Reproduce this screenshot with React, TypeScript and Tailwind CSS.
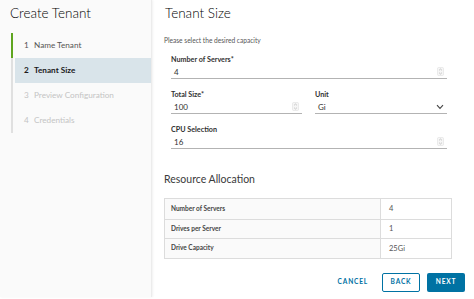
import React from "react";

const Spinner = () => (
  <svg width="7" height="9" viewBox="0 0 7 9" className="shrink-0">
    <rect x="0.5" y="0.5" width="6" height="8" rx="1" fill="#f6f6f6" stroke="#e0e0e0" strokeWidth="0.6" />
    <path d="M2 3.4 L3.5 2 L5 3.4" fill="none" stroke="#b4b4b4" strokeWidth="0.7" />
    <path d="M2 5.6 L3.5 7 L5 5.6" fill="none" stroke="#b4b4b4" strokeWidth="0.7" />
  </svg>
);

const Chevron = () => (
  <svg width="8" height="6" viewBox="0 0 8 6" className="shrink-0">
    <path d="M1 1.2 L4 4.4 L7 1.2" fill="none" stroke="#454545" strokeWidth="1.1" />
  </svg>
);

function Field({ label, value, icon }: { label: string; value: string; icon: React.ReactNode }) {
  return (
    <div className="flex flex-col">
      <div className="text-[7.2px] font-bold text-[#313131] leading-[10px]">{label}</div>
      <div className="flex items-center h-[14px] pl-[3px] pr-[3px] border-b border-[#b3b3b3] text-[8px] text-[#313131]">
        <span className="flex-1">{value}</span>
        {icon}
      </div>
    </div>
  );
}

export default function App() {
  const rows = [
    ["Number of Servers", "4"],
    ["Drives per Server", "1"],
    ["Drive Capacity", "25Gi"],
  ];
  return (
    <div className="w-[474px] h-[299px] flex bg-white overflow-hidden" style={{ fontFamily: "Lato, 'Open Sans', sans-serif" }}>
      <aside className="w-[152px] h-[297px] shrink-0 bg-[#fafafa] border-r border-[#ececec] shadow-[1px_0_2px_rgba(0,0,0,0.06)] flex flex-col">
        <div className="pl-[10px] pt-[4px] h-[33px] text-[13.5px] font-light text-black leading-[18px]">Create Tenant</div>
        <div className="ml-[11px] flex flex-col">
          <div className="flex">
            <div className="w-[2px] bg-[#5fa51f]" />
            <div className="flex-1 ml-[2px] h-[25px] flex items-center pl-[9px] text-[8.2px] text-[#565656]">
              <span className="w-[10px]">1</span>
              <span>Name Tenant</span>
            </div>
          </div>
          {[
            ["2", "Tenant Size", true],
            ["3", "Preview Configuration", false],
            ["4", "Credentials", false],
          ].map(([n, t, active]) => (
            <div key={n as string} className="flex">
              <div className="w-[2px] bg-[#e0e0e0]" />
              <div
                className={
                  active
                    ? "flex-1 ml-[2px] h-[25px] flex items-center pl-[9px] text-[8.2px] font-bold text-[#1a1a1a] bg-[#d9e4ea]"
                    : "flex-1 ml-[2px] h-[25px] flex items-center pl-[9px] text-[8.2px] text-[#c4c4c4]"
                }
              >
                <span className="w-[10px]">{n}</span>
                <span>{t}</span>
              </div>
            </div>
          ))}
        </div>
      </aside>
      <main className="flex-1 flex flex-col pl-[12px] pr-[9px]">
        <div className="pt-[4px] pl-[1px] h-[35px] text-[13.5px] font-light text-black leading-[18px]">Tenant Size</div>
        <div className="text-[6.6px] text-[#565656] leading-[10px] h-[20px]">Please select the desired capacity</div>
        <div className="pl-[7px] pr-[18px] flex flex-col gap-[11px]">
          <Field label="Number of Servers*" value="4" icon={<Spinner />} />
          <div className="flex gap-[13px]">
            <div className="w-[131px]">
              <Field label="Total Size*" value="100" icon={<Spinner />} />
            </div>
            <div className="flex-1">
              <Field label="Unit" value="Gi" icon={<Chevron />} />
            </div>
          </div>
          <Field label="CPU Selection" value="16" icon={<Spinner />} />
        </div>
        <div className="mt-[23px] text-[10.5px] font-normal text-[#3a3a3a] leading-[14px]">Resource Allocation</div>
        <div className="mt-[12px] mr-[13px] border border-[#dcdcdc] flex flex-col">
          {rows.map(([k, v], i) => (
            <div key={k} className={i > 0 ? "flex h-[19.5px] border-t border-[#dcdcdc]" : "flex h-[19.5px]"}>
              <div className="w-[216px] bg-[#fafafa] border-r border-[#dcdcdc] pl-[6px] flex items-center text-[6.5px] font-bold text-[#454545]">{k}</div>
              <div className="flex-1 pl-[8px] flex items-center text-[7.5px] text-[#565656]">{v}</div>
            </div>
          ))}
        </div>
        <div className="mt-[14px] flex justify-end items-center">
          <button className="h-[19px] px-[3px] text-[6.6px] font-bold tracking-[0.8px] text-[#0072a3] mr-[11px]">CANCEL</button>
          <button className="h-[19px] w-[38px] border border-[#0072a3] rounded-[2px] text-[6.6px] font-bold tracking-[0.8px] text-[#0072a3] mr-[7px]">BACK</button>
          <button className="h-[19px] w-[38px] rounded-[2px] bg-[#0072a3] text-[6.6px] font-bold tracking-[0.8px] text-white">NEXT</button>
        </div>
      </main>
    </div>
  );
}
